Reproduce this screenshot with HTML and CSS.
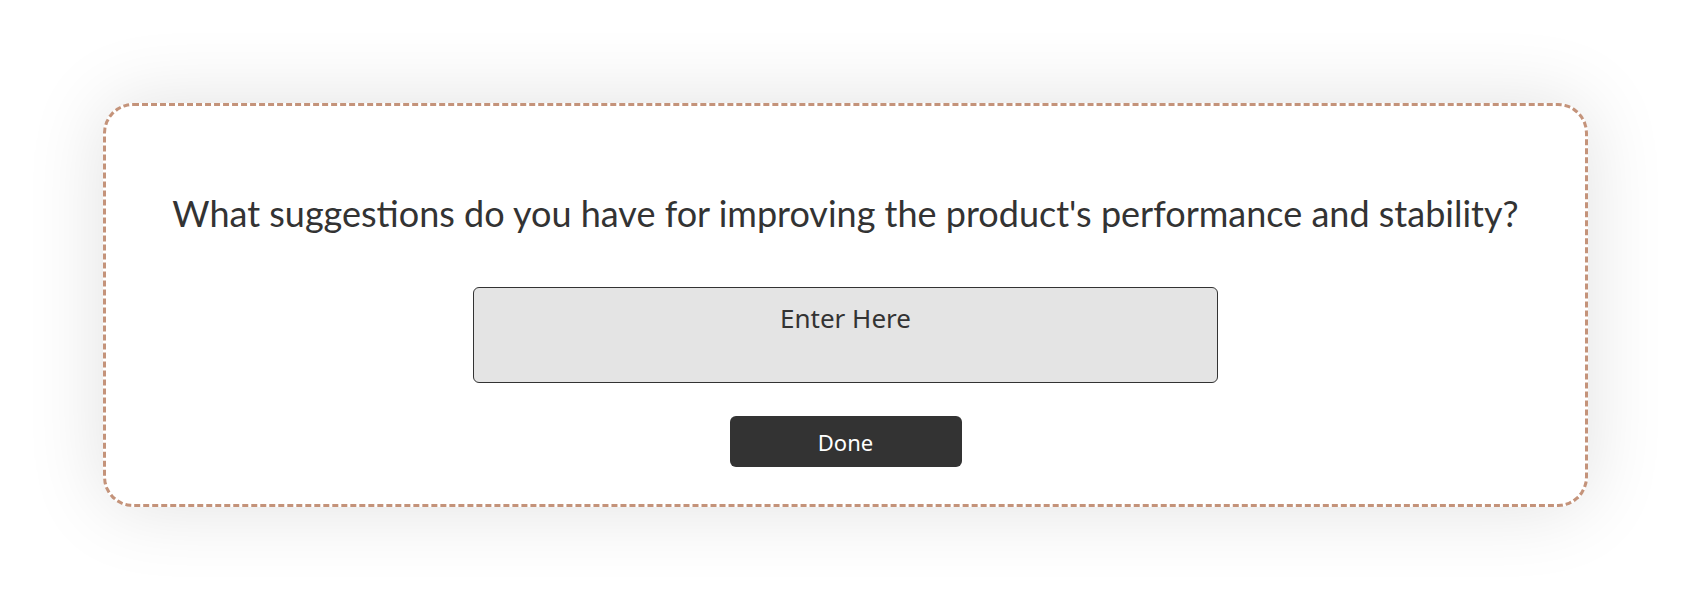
FILE: index.html
```html
<!DOCTYPE html>
<html lang="en">
<head>
<title>Feedback</title>
<meta charset="UTF-8">
<meta name="viewport" content="width=device-width, initial-scale=1">
<link rel="stylesheet" href="styles.css">
</head>
<body>
    <div class="page">
        <div class="card">
            <h1 class="question">What suggestions do you have for improving the product's performance and stability?</h1>
            <textarea class="answer" placeholder="Enter Here"></textarea>
            <button class="btn">Done</button>
        </div>
    </div>
</body>
</html>
```

FILE: styles.css
```css
body {
  margin: 0;
  background-color: #ffffff;
  font-family: "Noto Sans", "Open Sans", sans-serif;
}
.page {
  height: 610px;
  padding: 103px 102px 103px 103px;
  box-sizing: border-box;
}
/* the dashed question card */
.card {
  height: 100%;
  box-sizing: border-box;
  border: 3px dashed #c4937a;
  border-radius: 30px;
  background-color: #ffffff;
  box-shadow: 0 0 80px rgba(0, 0, 0, 0.12);
  display: flex;
  flex-direction: column;
  align-items: center;
  padding-top: 87px;
}
.question {
  margin: 0;
  font-family: Lato, sans-serif;
  font-weight: 400;
  font-size: 36px;
  line-height: 40px;
  color: #333333;
}
.answer {
  margin-top: 54px;
  width: 745px;
  height: 96px;
  box-sizing: border-box;
  background-color: #e4e4e4;
  border: 1.5px solid #333333;
  border-radius: 6px;
  padding: 12px;
  resize: none;
  text-align: center;
  font-family: "Noto Sans", sans-serif;
  font-size: 26px;
}
.answer::placeholder {
  color: #333333;
}
.btn {
  margin-top: 33px;
  width: 232px;
  height: 51px;
  border: none;
  border-radius: 6px;
  background-color: #333333;
  color: white;
  font-family: "Noto Sans", sans-serif;
  font-size: 22px;
  cursor: pointer;
}
```
